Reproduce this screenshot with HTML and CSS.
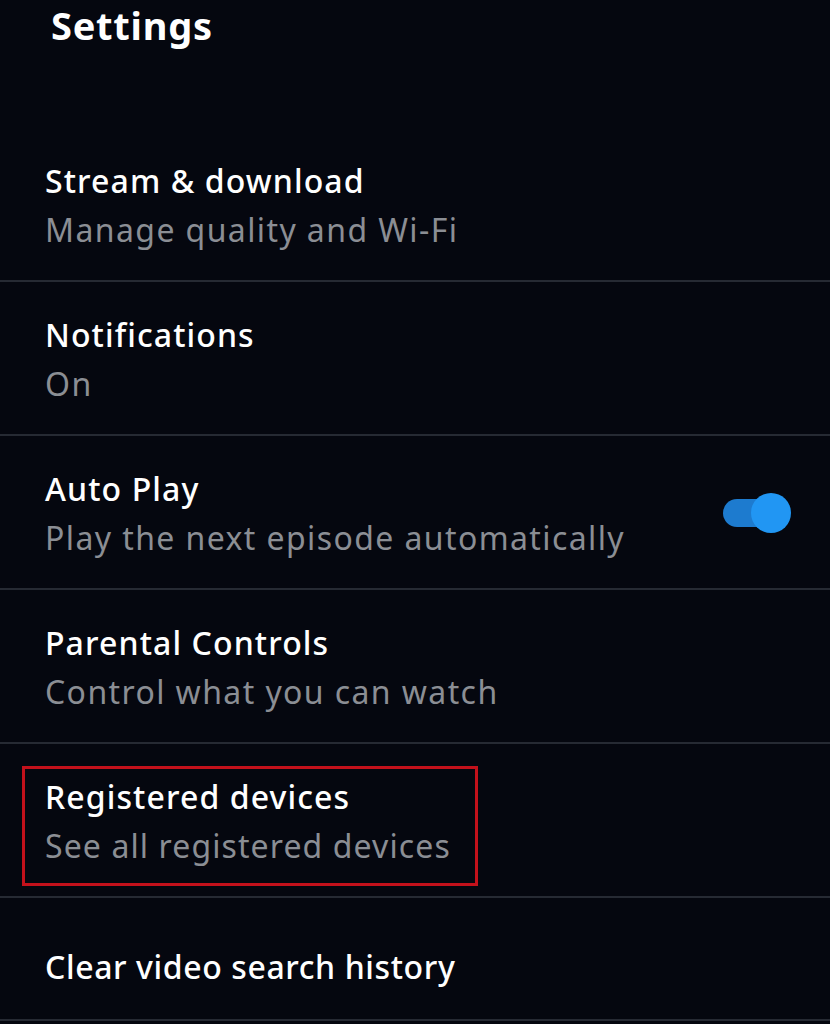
FILE: index.html
```html
<!DOCTYPE html>
<html lang="en">
<head>
    <meta charset="UTF-8">
    <meta name="viewport" content="width=device-width, initial-scale=1.0">
    <title>Settings</title>
    <link rel="stylesheet" href="styles.css">
</head>
<body>

    <div class="page">
        <h1 class="page-title">Settings</h1>

        <ul class="settings-list">
            <li class="setting">
                <div class="setting-text">
                    <div class="setting-name">Stream &amp; download</div>
                    <div class="setting-desc">Manage quality and Wi-Fi</div>
                </div>
            </li>
            <li class="setting">
                <div class="setting-text">
                    <div class="setting-name">Notifications</div>
                    <div class="setting-desc">On</div>
                </div>
            </li>
            <li class="setting">
                <div class="setting-text">
                    <div class="setting-name">Auto Play</div>
                    <div class="setting-desc">Play the next episode automatically</div>
                </div>
                <div class="toggle on">
                    <span class="toggle-track"></span>
                    <span class="toggle-knob"></span>
                </div>
            </li>
            <li class="setting">
                <div class="setting-text">
                    <div class="setting-name">Parental Controls</div>
                    <div class="setting-desc">Control what you can watch</div>
                </div>
            </li>
            <li class="setting">
                <div class="setting-text marked">
                    <div class="setting-name">Registered devices</div>
                    <div class="setting-desc">See all registered devices</div>
                </div>
            </li>
            <li class="setting single">
                <div class="setting-text">
                    <div class="setting-name narrow">Clear video search history</div>
                </div>
            </li>
        </ul>
    </div>

</body>
</html>
```

FILE: styles.css
```css
* {
    box-sizing: border-box;
    margin: 0;
    padding: 0;
}
body {
    font-family: 'Noto Sans', 'Open Sans', sans-serif;
    background-color: #05070f;
    color: #ffffff;
    width: 830px;
    height: 1024px;
    overflow: hidden;
}
.page-title {
    font-size: 38px;
    font-weight: 700;
    letter-spacing: 0.75px;
    line-height: 50px;
    padding-left: 51px;
    height: 128px;
}
.settings-list {
    list-style: none;
}
.setting {
    display: flex;
    align-items: center;
    justify-content: space-between;
    padding: 28px 39px 26px 45px;
    border-bottom: 2px solid #262a33;
}
.setting.single {
    padding-top: 44px;
    padding-bottom: 28px;
}
.setting-name {
    font-size: 32px;
    font-weight: 500;
    letter-spacing: 1.1px;
    line-height: 49px;
    color: #ffffff;
}
.setting-name.narrow {
    letter-spacing: 0.6px;
}
.setting-desc {
    font-size: 32px;
    letter-spacing: 1.4px;
    line-height: 49px;
    color: #8b8e94;
}
.marked {
    border: 3px solid #c3111b;
    margin: -6px 0 -16px -23px;
    padding: 3px 24px 13px 20px;
}
.marked .setting-desc {
    letter-spacing: 1.1px;
}
.toggle {
    position: relative;
    width: 68px;
    height: 40px;
}
.toggle-track {
    position: absolute;
    left: 0;
    top: 6px;
    width: 56px;
    height: 28px;
    border-radius: 14px;
    background-color: #1d7bcf;
}
.toggle-knob {
    position: absolute;
    right: 0;
    top: 0;
    width: 40px;
    height: 40px;
    border-radius: 50%;
    background-color: #2196f3;
}
```
